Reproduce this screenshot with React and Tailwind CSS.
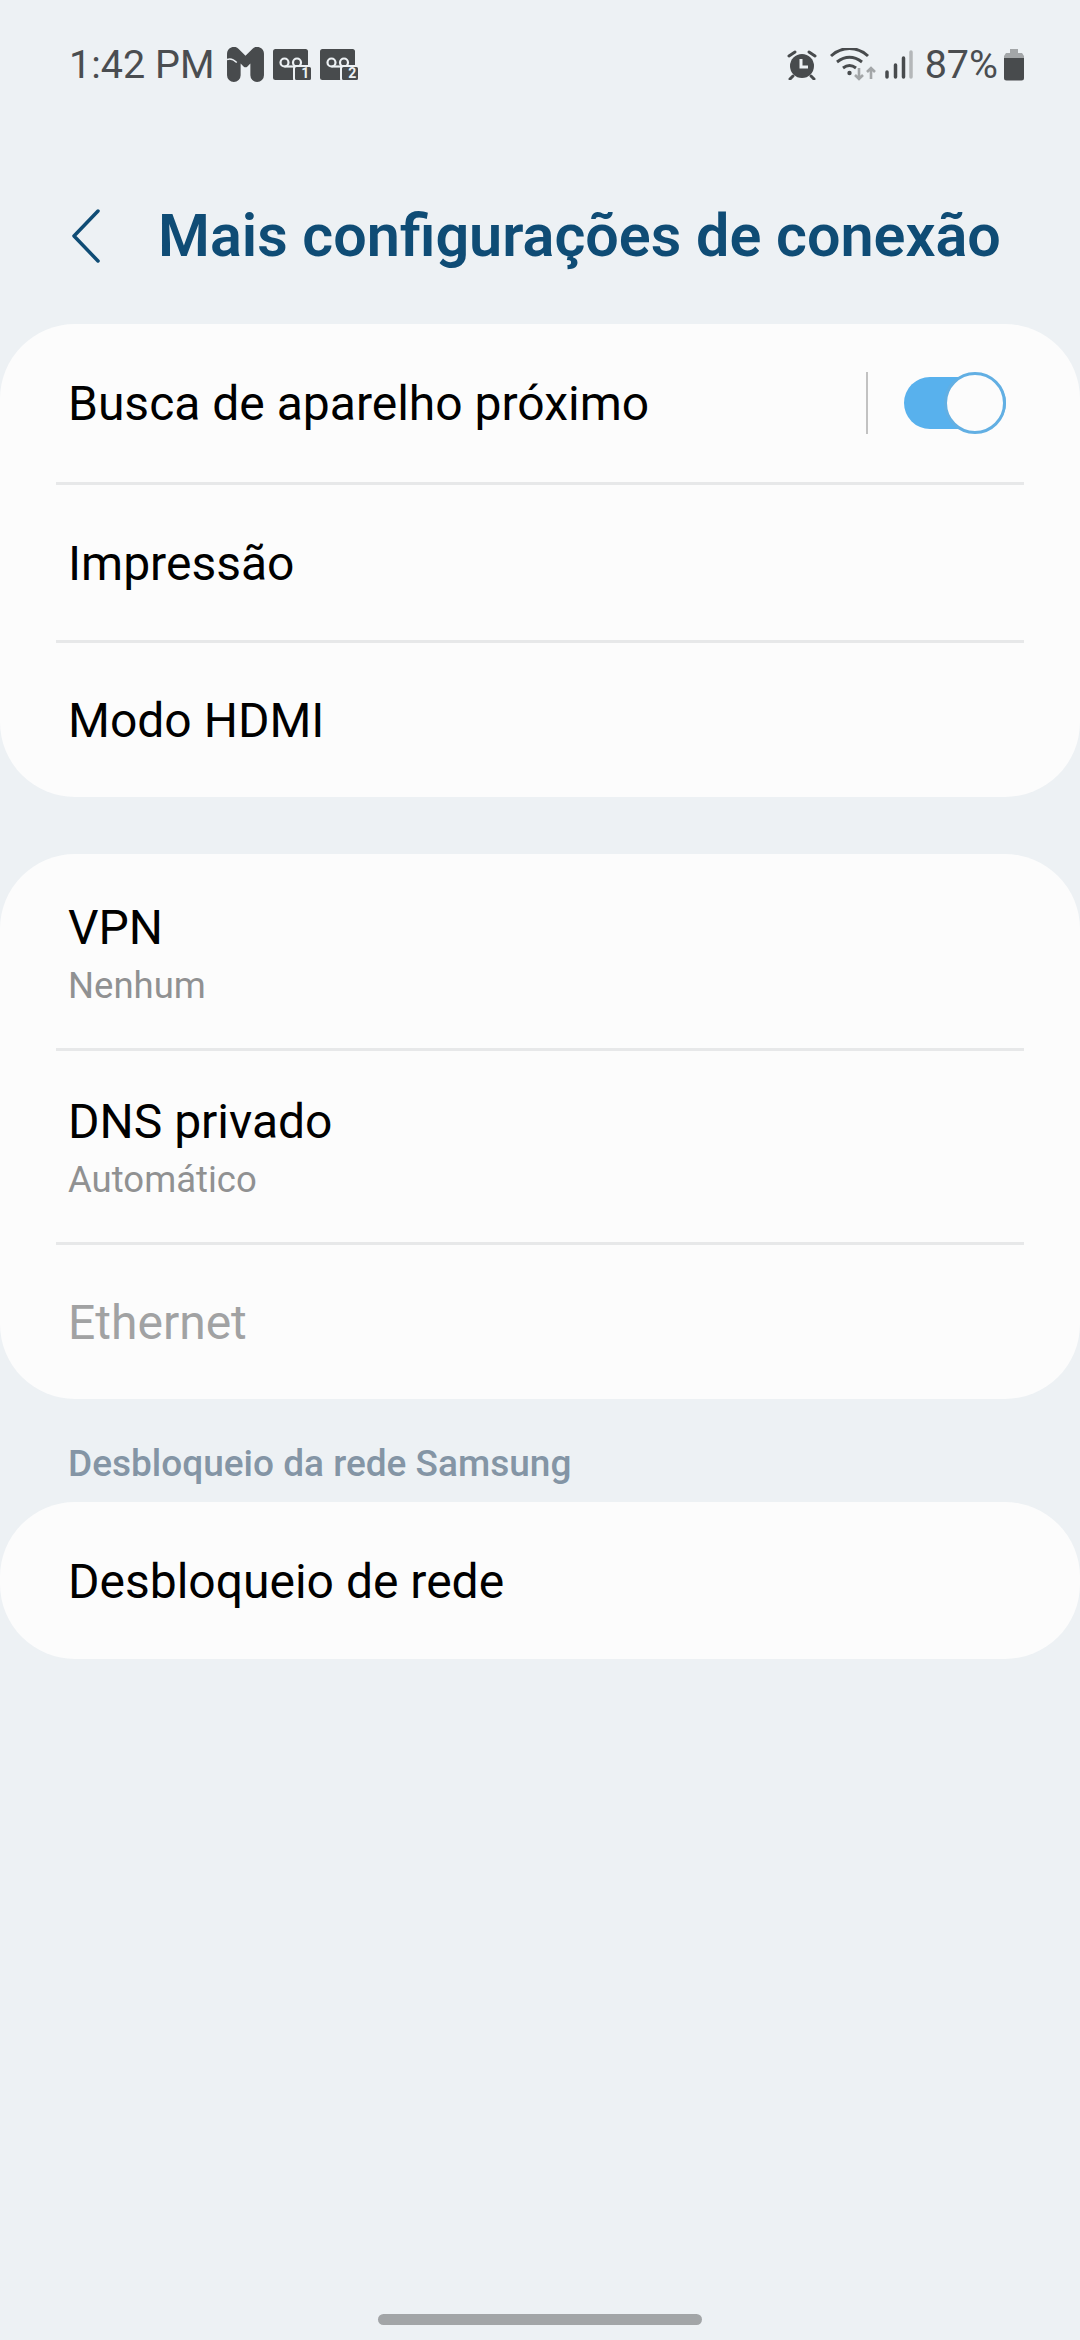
function StatusBar() {
  return (
    <div className="h-[124px] flex items-center justify-between pl-[69px] pr-[55px] pt-[5px] text-[#4a4d50]">
      <div className="flex items-center">
        <span className="text-[39.500px] leading-none">1:42 PM</span>
        <svg className="ml-[13px]" width="37" height="35" viewBox="0 0 38 36" fill="#484b4d">
          <path d="M0 7a7 7 0 0 1 12-5l7 7 7-7a7 7 0 0 1 12 5v22a7 7 0 0 1-14 0V17l-3 3a3 3 0 0 1-4 0l-3-3v12a7 7 0 0 1-14 0z" />
          <path d="M0 13c4-2 7 0 10 3" stroke="#edf1f4" strokeWidth="1.5" fill="none" />
        </svg>
        <VoicemailIcon n="1" className="ml-[9px]" />
        <VoicemailIcon n="2" className="ml-[8px]" />
      </div>
      <div className="flex items-center">
        <svg width="30" height="30" viewBox="0 0 30 30" fill="#484b4d">
          <circle cx="15" cy="16" r="12" />
          <path d="M2 6l6-4M28 6l-6-4M6 26l-3 3M24 26l3 3" stroke="#484b4d" strokeWidth="3" strokeLinecap="round" />
          <path d="M14 9v8h7" stroke="#edf1f4" strokeWidth="3" fill="none" />
        </svg>
        <svg className="ml-[13px]" width="46" height="34" viewBox="0 0 46 34" fill="none">
          <path d="M1 8c11-10 26-10 37 0" stroke="#484b4d" strokeWidth="3" />
          <path d="M7 14c8-6 17-6 25 0" stroke="#484b4d" strokeWidth="3" />
          <path d="M13 20c4-3 9-3 13 0" stroke="#484b4d" strokeWidth="3" />
          <circle cx="19.500" cy="25" r="2.200" fill="#484b4d" />
          <path d="M29 20v11M25 27l4 4 4-4M41 31V20M37 24l4-4 4 4" stroke="#a3a6a8" strokeWidth="2.600" />
        </svg>
        <svg className="ml-[9px]" width="28" height="30" viewBox="0 0 28 30" fill="none" strokeLinecap="round" strokeWidth="3.500">
          <path d="M2 27v-5M10.500 27V15M18.500 27V8" stroke="#484b4d" />
          <path d="M26 27V2" stroke="#b4b7b9" />
        </svg>
        <span className="ml-[12px] text-[39.500px] leading-none">87%</span>
        <svg className="ml-[5px]" width="22" height="32" viewBox="0 0 22 32">
          <path d="M7 0h8v4H7z" fill="#a3a6a8" />
          <path d="M3 4h16l2 3v4H1V7z" fill="#a3a6a8" />
          <path d="M1 9h20v20a2.500 2.500 0 0 1-2.500 2.500h-15A2.500 2.500 0 0 1 1 29z" fill="#484b4d" />
        </svg>
      </div>
    </div>
  );
}

function VoicemailIcon({ n, className }) {
  return (
    <div className={`relative w-[39px] h-[32px] ${className}`}>
      <svg width="39" height="32" viewBox="0 0 39 32">
        <rect x="0" y="0" width="35" height="31" rx="2.500" fill="#484b4d" />
        <circle cx="11.500" cy="13.500" r="4" fill="none" stroke="#edf1f4" strokeWidth="2.200" />
        <circle cx="24" cy="13.500" r="4" fill="none" stroke="#edf1f4" strokeWidth="2.200" />
        <path d="M11.500 17.500h12.500" stroke="#edf1f4" strokeWidth="2.200" />
        <rect x="21" y="17" width="18" height="15" rx="2.500" fill="#484b4d" stroke="#edf1f4" strokeWidth="2" />
      </svg>
      <span className="absolute right-[3px] bottom-[1px] text-[14px] leading-[14px] font-bold text-[#edf1f4]">{n}</span>
    </div>
  );
}

function Header() {
  return (
    <div className="h-[200px] flex items-center pt-[23px]">
      <svg className="ml-[71px]" width="30" height="56" viewBox="0 0 30 56" fill="none">
        <path d="M27 3L3 28l24 25" stroke="#0f4c75" strokeWidth="3.500" strokeLinecap="round" strokeLinejoin="round" />
      </svg>
      <h1 className="ml-[57px] text-[59.300px] leading-none font-semibold text-[#0f4c75] whitespace-nowrap">
        Mais configurações de conexão
      </h1>
    </div>
  );
}

function Divider() {
  return <div className="h-[3px] mx-[56px] bg-[#e7e8e9]" />;
}

function Row({ title, sub, disabled, children, className }) {
  return (
    <div className={`flex items-center justify-between pl-[68px] ${className}`}>
      <div>
        <div className={`text-[48px] leading-[56px] ${disabled ? 'text-[#a1a2a3]' : 'text-black'}`}>{title}</div>
        {sub && <div className="text-[36.500px] leading-[44px] mt-[8px] text-[#909192]">{sub}</div>}
      </div>
      {children}
    </div>
  );
}

function Toggle() {
  return (
    <div className="flex items-center mr-[74px] -mt-[2px]">
      <div className="w-[2px] h-[62px] bg-[#c2c2c2]" />
      <div className="relative ml-[36px] w-[102px] h-[52px] rounded-full bg-[#58b1ed]">
        <div className="absolute right-0 top-[-5px] w-[62px] h-[62px] rounded-full bg-[#fcfcfc] border-[3px] border-[#62afe3]" />
      </div>
    </div>
  );
}

export default function App() {
  return (
    <div className="w-[1080px] h-[2340px] bg-[#edf1f4] relative font-['Roboto',sans-serif] overflow-hidden">
      <StatusBar />
      <Header />
      <div className="bg-[#fcfcfc] rounded-[75px]">
        <Row title="Busca de aparelho próximo" className="h-[158px] pt-[2px]">
          <Toggle />
        </Row>
        <Divider />
        <Row title="Impressão" className="h-[155px] pt-[3px]" />
        <Divider />
        <Row title="Modo HDMI" className="h-[154px] pt-[1px]" />
      </div>
      <div className="mt-[57px] bg-[#fcfcfc] rounded-[75px]">
        <Row title="VPN" sub="Nenhum" className="h-[194px] pt-[5px]" />
        <Divider />
        <Row title="DNS privado" sub="Automático" className="h-[191px] pt-[2px]" />
        <Divider />
        <Row title="Ethernet" disabled className="h-[154px] pt-[1px]" />
      </div>
      <div className="h-[103px] pl-[68px] pt-[43px] text-[37px] leading-[44px] font-medium text-[#8495a5]">
        Desbloqueio da rede Samsung
      </div>
      <div className="bg-[#fcfcfc] rounded-[75px]">
        <Row title="Desbloqueio de rede" className="h-[157px] pt-[3px]" />
      </div>
      <div className="absolute left-[378px] top-[2314px] w-[324px] h-[11px] rounded-full bg-[#a2a5a7]" />
    </div>
  );
}
